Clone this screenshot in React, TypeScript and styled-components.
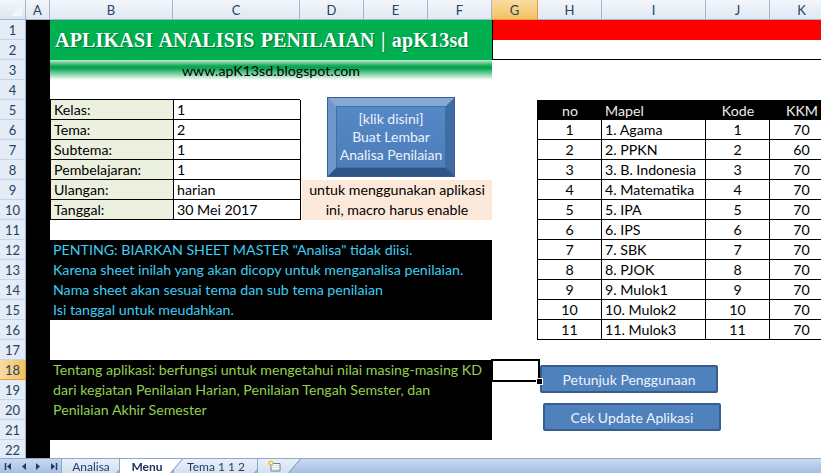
import styled, { createGlobalStyle } from "styled-components";

const GlobalStyle = createGlobalStyle`
	html, body {
		margin: 0;
		padding: 0;
		background: #fff;
	}
	body {
		font-family: Lato, "Liberation Sans", sans-serif;
	}
`;

const Window = styled.div`
	width: 821px;
	height: 473px;
	overflow: hidden;
	display: flex;
	flex-direction: column;
	background: #fff;
`;

const Sheet = styled.div`
	flex: 1;
	min-height: 0;
	overflow: hidden;
	display: grid;
	grid-template-columns: 26px 24px 123px 127px 64px 64px 64px 46px 64px 104px 64px 64px;
	grid-template-rows: repeat(23, 20px);
	font-family: Lato, "Liberation Sans", sans-serif;
	font-size: 14.2px;
	color: #000;
`;

const Corner = styled.div`
	grid-row: 1;
	grid-column: 1;
	position: relative;
	box-sizing: border-box;
	background: linear-gradient(#f4f7fb, #dde6f2);
	border-right: 1px solid #9eb6ce;
	border-bottom: 1px solid #9eb6ce;

	&::after {
		content: "";
		position: absolute;
		right: 3px;
		bottom: 3px;
		border-left: 11px solid transparent;
		border-bottom: 11px solid #f3f6fa;
	}
`;

const ColHead = styled.div<{ $col: number; $active?: boolean }>`
	grid-row: 1;
	grid-column: ${(p) => p.$col};
	box-sizing: border-box;
	display: flex;
	align-items: center;
	justify-content: center;
	font-size: 13px;
	color: #27415f;
	background: ${(p) =>
		p.$active
			? "linear-gradient(#f9dca4, #f1c15f)"
			: "linear-gradient(#f3f6fb, #e0e8f3)"};
	border-right: 1px solid ${(p) => (p.$active ? "#f29536" : "#9eb6ce")};
	border-bottom: 1px solid ${(p) => (p.$active ? "#f29536" : "#9eb6ce")};
`;

const RowHead = styled.div<{ $row: number; $active?: boolean }>`
	grid-column: 1;
	grid-row: ${(p) => p.$row + 1};
	box-sizing: border-box;
	display: flex;
	align-items: center;
	justify-content: center;
	font-size: 13px;
	color: #27415f;
	background: ${(p) =>
		p.$active ? "linear-gradient(90deg, #f9dca4, #f1c15f)" : "#e4ecf7"};
	border-right: 1px solid ${(p) => (p.$active ? "#f29536" : "#9eb6ce")};
	border-bottom: 1px solid ${(p) => (p.$active ? "#f29536" : "#c5d5e8")};
`;

const BlackColumn = styled.div`
	grid-column: 2;
	grid-row: 2 / 24;
	background: #000;
`;

const TitleBand = styled.div`
	grid-column: 3 / 8;
	grid-row: 2 / 4;
	display: flex;
	align-items: center;
	padding-left: 5px;
	background: #00b050;
	font-family: "Liberation Serif", serif;
	font-weight: bold;
	font-size: 20px;
	letter-spacing: 0.2px;
	word-spacing: 1px;
	color: #fff;
	white-space: nowrap;
	text-shadow: 1px 1px 1px rgba(0, 70, 30, 0.55);
`;

const UrlBand = styled.div`
	grid-column: 3 / 8;
	grid-row: 4;
	text-align: center;
	line-height: 21px;
	background: linear-gradient(
		#c5ead3 0%,
		#1aab5a 28%,
		#00a44f 40%,
		#7fd1a2 70%,
		#ffffff 100%
	);
`;

const FlagBox = styled.div`
	grid-column: 8 / 13;
	grid-row: 2 / 4;
	display: flex;
	flex-direction: column;
	box-sizing: border-box;
	border-left: 1px solid #000;
	border-bottom: 1px solid #000;
`;

const FlagRed = styled.div`
	flex: 1;
	background: #ff0000;
`;

const FlagWhite = styled.div`
	flex: 1;
	background: #fff;
`;

const InfoTable = styled.div`
	grid-column: 3 / 5;
	grid-row: 6 / 12;
	display: grid;
	grid-template-columns: 123px 127px;
	grid-auto-rows: 1fr;
	box-sizing: border-box;
	margin-top: -1px;
	border-top: 1px solid #000;
	border-left: 1px solid #000;
`;

const InfoCell = styled.div<{ $label?: boolean }>`
	display: flex;
	align-items: center;
	padding-left: 3px;
	box-sizing: border-box;
	border-right: 1px solid #000;
	border-bottom: 1px solid #000;
	background: ${(p) => (p.$label ? "#ebf1de" : "#fff")};
	white-space: nowrap;
`;

const MacroSlot = styled.div`
	grid-column: 5 / 8;
	grid-row: 5 / 10;
	display: flex;
	align-items: flex-end;
	padding: 0 0 3px 27px;
`;

const BevelButton = styled.div`
	width: 128px;
	height: 80px;
	box-sizing: border-box;
	border-style: solid;
	border-width: 9px;
	border-color: #86a9d8 #3f6ba2 #2f5586 #6f97cb;
	outline: 1px solid #3a5f8e;
	outline-offset: -1px;
	background: #4f81bd;
	display: flex;
	cursor: pointer;
`;

const BevelFace = styled.div`
	flex: 1;
	display: flex;
	flex-direction: column;
	align-items: center;
	justify-content: center;
	border: 1px solid #416f9f;
	background: linear-gradient(#5588c6, #4c7eba);
	color: #edf2fa;
	font-size: 14px;
	line-height: 18px;
	white-space: nowrap;
`;

const MacroNote = styled.div`
	grid-column: 5 / 8;
	grid-row: 10 / 12;
	margin-left: 2px;
	display: flex;
	flex-direction: column;
	align-items: center;
	justify-content: center;
	background: #fde9d9;
	line-height: 20px;
	white-space: nowrap;
`;

const MapelTable = styled.div`
	grid-column: 9 / 13;
	grid-row: 6 / 18;
	display: grid;
	grid-template-columns: 64px 104px 64px 64px;
	grid-auto-rows: 1fr;
	box-sizing: border-box;
	margin-left: -1px;
	border-left: 1px solid #000;
`;

const MapelHead = styled.div<{ $align: string }>`
	display: flex;
	align-items: center;
	justify-content: ${(p) => p.$align};
	padding-left: ${(p) => (p.$align === "flex-start" ? "3px" : "0")};
	background: #000;
	color: #ebebeb;
`;

const MapelCell = styled.div<{ $align: string }>`
	display: flex;
	align-items: center;
	justify-content: ${(p) => p.$align};
	padding-left: ${(p) => (p.$align === "flex-start" ? "3px" : "0")};
	box-sizing: border-box;
	border-right: 1px solid #000;
	border-bottom: 1px solid #000;
	white-space: nowrap;
`;

const NoteBlock = styled.div<{ $rows: string; $color: string }>`
	grid-column: 3 / 8;
	grid-row: ${(p) => p.$rows};
	background: #000;
	color: ${(p) => p.$color};
	padding-left: 3px;
	line-height: 20px;
	white-space: nowrap;
`;

const SelectedCell = styled.div`
	grid-column: 8;
	grid-row: 19;
	position: relative;
	margin: -1px -2px -2px -1px;
	border: 2px solid #000;

	&::after {
		content: "";
		position: absolute;
		right: -5px;
		bottom: -5px;
		width: 5px;
		height: 5px;
		background: #000;
		border: 1px solid #fff;
	}
`;

const ShapeStack = styled.div`
	grid-column: 9 / 12;
	grid-row: 19 / 23;
	display: flex;
	flex-direction: column;
	padding-top: 5px;
	gap: 10px;
`;

const ShapeButton = styled.div<{ $indent: number }>`
	width: 178px;
	height: 28px;
	margin-left: ${(p) => p.$indent}px;
	box-sizing: border-box;
	display: flex;
	align-items: center;
	justify-content: center;
	background: #4f81bd;
	border: 2px solid #385d8a;
	border-radius: 2px;
	color: #eef3fa;
	font-size: 14px;
	cursor: pointer;
`;

const TabBar = styled.div`
	height: 15px;
	display: flex;
	align-items: stretch;
	box-sizing: border-box;
	border-top: 1px solid #8fa9ce;
	background: linear-gradient(#c9d9ef, #a5bfe4);
	font-family: Lato, "Liberation Sans", sans-serif;
	font-size: 12px;
	color: #1f3a5f;
`;

const NavGroup = styled.div`
	width: 62px;
	display: flex;
	align-items: center;
	justify-content: space-around;
	padding: 0 2px;
	box-sizing: border-box;
`;

const TabWrap = styled.div<{ $front?: boolean }>`
	display: flex;
	margin-right: -8px;
	z-index: ${(p) => (p.$front ? 2 : 1)};
	filter: drop-shadow(1px 0 0 #7590b8) drop-shadow(-1px 0 0 #8ea6c9);
`;

const Tab = styled.div<{ $active?: boolean; $width: number }>`
	width: ${(p) => p.$width}px;
	display: flex;
	align-items: center;
	justify-content: center;
	padding-right: 8px;
	box-sizing: border-box;
	clip-path: polygon(0 0, 100% 0, calc(100% - 12px) 100%, 0 100%);
	background: ${(p) =>
		p.$active ? "#ffffff" : "linear-gradient(#e9f0f9, #d3e0f1)"};
	font-weight: ${(p) => (p.$active ? "bold" : "normal")};
	color: ${(p) => (p.$active ? "#1b3560" : "#22406a")};
	white-space: nowrap;
`;

const infoRows: [string, string][] = [
	["Kelas:", "1"],
	["Tema:", "2"],
	["Subtema:", "1"],
	["Pembelajaran:", "1"],
	["Ulangan:", "harian"],
	["Tanggal:", "30 Mei 2017"],
];

const mapel: [string, number][] = [
	["Agama", 70],
	["PPKN", 60],
	["B. Indonesia", 70],
	["Matematika", 70],
	["IPA", 70],
	["IPS", 70],
	["SBK", 70],
	["PJOK", 70],
	["Mulok1", 70],
	["Mulok2", 70],
	["Mulok3", 70],
];

const letters = ["A", "B", "C", "D", "E", "F", "G", "H", "I", "J", "K"];

function NavArrow({ dir, bar }: { dir: "l" | "r"; bar?: boolean }) {
	const tri = dir === "l" ? "M7 1 L3 4.5 L7 8 Z" : "M3 1 L7 4.5 L3 8 Z";
	const barX = dir === "l" ? 1.5 : 8.5;
	return (
		<svg width="10" height="9" viewBox="0 0 10 9">
			<path d={tri} fill="#1f3a69" />
			{bar && <rect x={barX - 0.75} y="1" width="1.5" height="7" fill="#1f3a69" />}
		</svg>
	);
}

function InsertSheetIcon() {
	return (
		<svg width="16" height="12" viewBox="0 0 16 12">
			<path d="M4 3.5 H13 V11 H4 Z" fill="#fff" stroke="#6a7f9c" strokeWidth="1" />
			<path d="M5 5.5 H12 M5 7.5 H12 M5 9.5 H12" stroke="#c6d2e3" strokeWidth="0.8" />
			<circle cx="4" cy="3" r="2.6" fill="#f6b94a" />
			<circle cx="4" cy="3" r="1.2" fill="#fff3c9" />
		</svg>
	);
}

export default function App() {
	return (
		<Window>
			<GlobalStyle />
			<Sheet>
				<Corner />
				{letters.map((l, i) => (
					<ColHead key={l} $col={i + 2} $active={l === "G"}>
						{l}
					</ColHead>
				))}
				{[...Array(22)].map((_, i) => (
					<RowHead key={i} $row={i + 1} $active={i + 1 === 18}>
						{i + 1}
					</RowHead>
				))}

				<BlackColumn />

				<TitleBand>APLIKASI ANALISIS PENILAIAN | apK13sd</TitleBand>
				<UrlBand>www.apK13sd.blogspot.com</UrlBand>
				<FlagBox>
					<FlagRed />
					<FlagWhite />
				</FlagBox>

				<InfoTable>
					{infoRows.map(([label, value]) => [
						<InfoCell key={label} $label>
							{label}
						</InfoCell>,
						<InfoCell key={label + "v"}>{value}</InfoCell>,
					])}
				</InfoTable>

				<MacroSlot>
					<BevelButton>
						<BevelFace>
							<span>[klik disini]</span>
							<span>Buat Lembar</span>
							<span>Analisa Penilaian</span>
						</BevelFace>
					</BevelButton>
				</MacroSlot>
				<MacroNote>
					<span>untuk menggunakan aplikasi</span>
					<span>ini, macro harus enable</span>
				</MacroNote>

				<MapelTable>
					<MapelHead $align="center">no</MapelHead>
					<MapelHead $align="flex-start">Mapel</MapelHead>
					<MapelHead $align="center">Kode</MapelHead>
					<MapelHead $align="center">KKM</MapelHead>
					{mapel.map(([name, kkm], i) => [
						<MapelCell key={name + "n"} $align="center">
							{i + 1}
						</MapelCell>,
						<MapelCell key={name} $align="flex-start">
							{i + 1}. {name}
						</MapelCell>,
						<MapelCell key={name + "k"} $align="center">
							{i + 1}
						</MapelCell>,
						<MapelCell key={name + "m"} $align="center">
							{kkm}
						</MapelCell>,
					])}
				</MapelTable>

				<NoteBlock $rows="13 / 17" $color="#3fcdf2">
					<div>PENTING: BIARKAN SHEET MASTER "Analisa" tidak diisi.</div>
					<div>Karena sheet inilah yang akan dicopy untuk menganalisa penilaian.</div>
					<div>Nama sheet akan sesuai tema dan sub tema penilaian</div>
					<div>Isi tanggal untuk meudahkan.</div>
				</NoteBlock>

				<NoteBlock $rows="19 / 23" $color="#92d050">
					<div>Tentang aplikasi: berfungsi untuk mengetahui nilai masing-masing KD</div>
					<div>dari kegiatan Penilaian Harian, Penilaian Tengah Semster, dan</div>
					<div>Penilaian Akhir Semester</div>
				</NoteBlock>

				<SelectedCell />

				<ShapeStack>
					<ShapeButton $indent={2}>Petunjuk Penggunaan</ShapeButton>
					<ShapeButton $indent={5}>Cek Update Aplikasi</ShapeButton>
				</ShapeStack>
			</Sheet>

			<TabBar>
				<NavGroup>
					<NavArrow dir="l" bar />
					<NavArrow dir="l" />
					<NavArrow dir="r" />
					<NavArrow dir="r" bar />
				</NavGroup>
				<TabWrap>
					<Tab $width={66}>Analisa</Tab>
				</TabWrap>
				<TabWrap $front>
					<Tab $width={62} $active>
						Menu
					</Tab>
				</TabWrap>
				<TabWrap>
					<Tab $width={92}>Tema 1 1 2</Tab>
				</TabWrap>
				<TabWrap>
					<Tab $width={42}>
						<InsertSheetIcon />
					</Tab>
				</TabWrap>
			</TabBar>
		</Window>
	);
}
